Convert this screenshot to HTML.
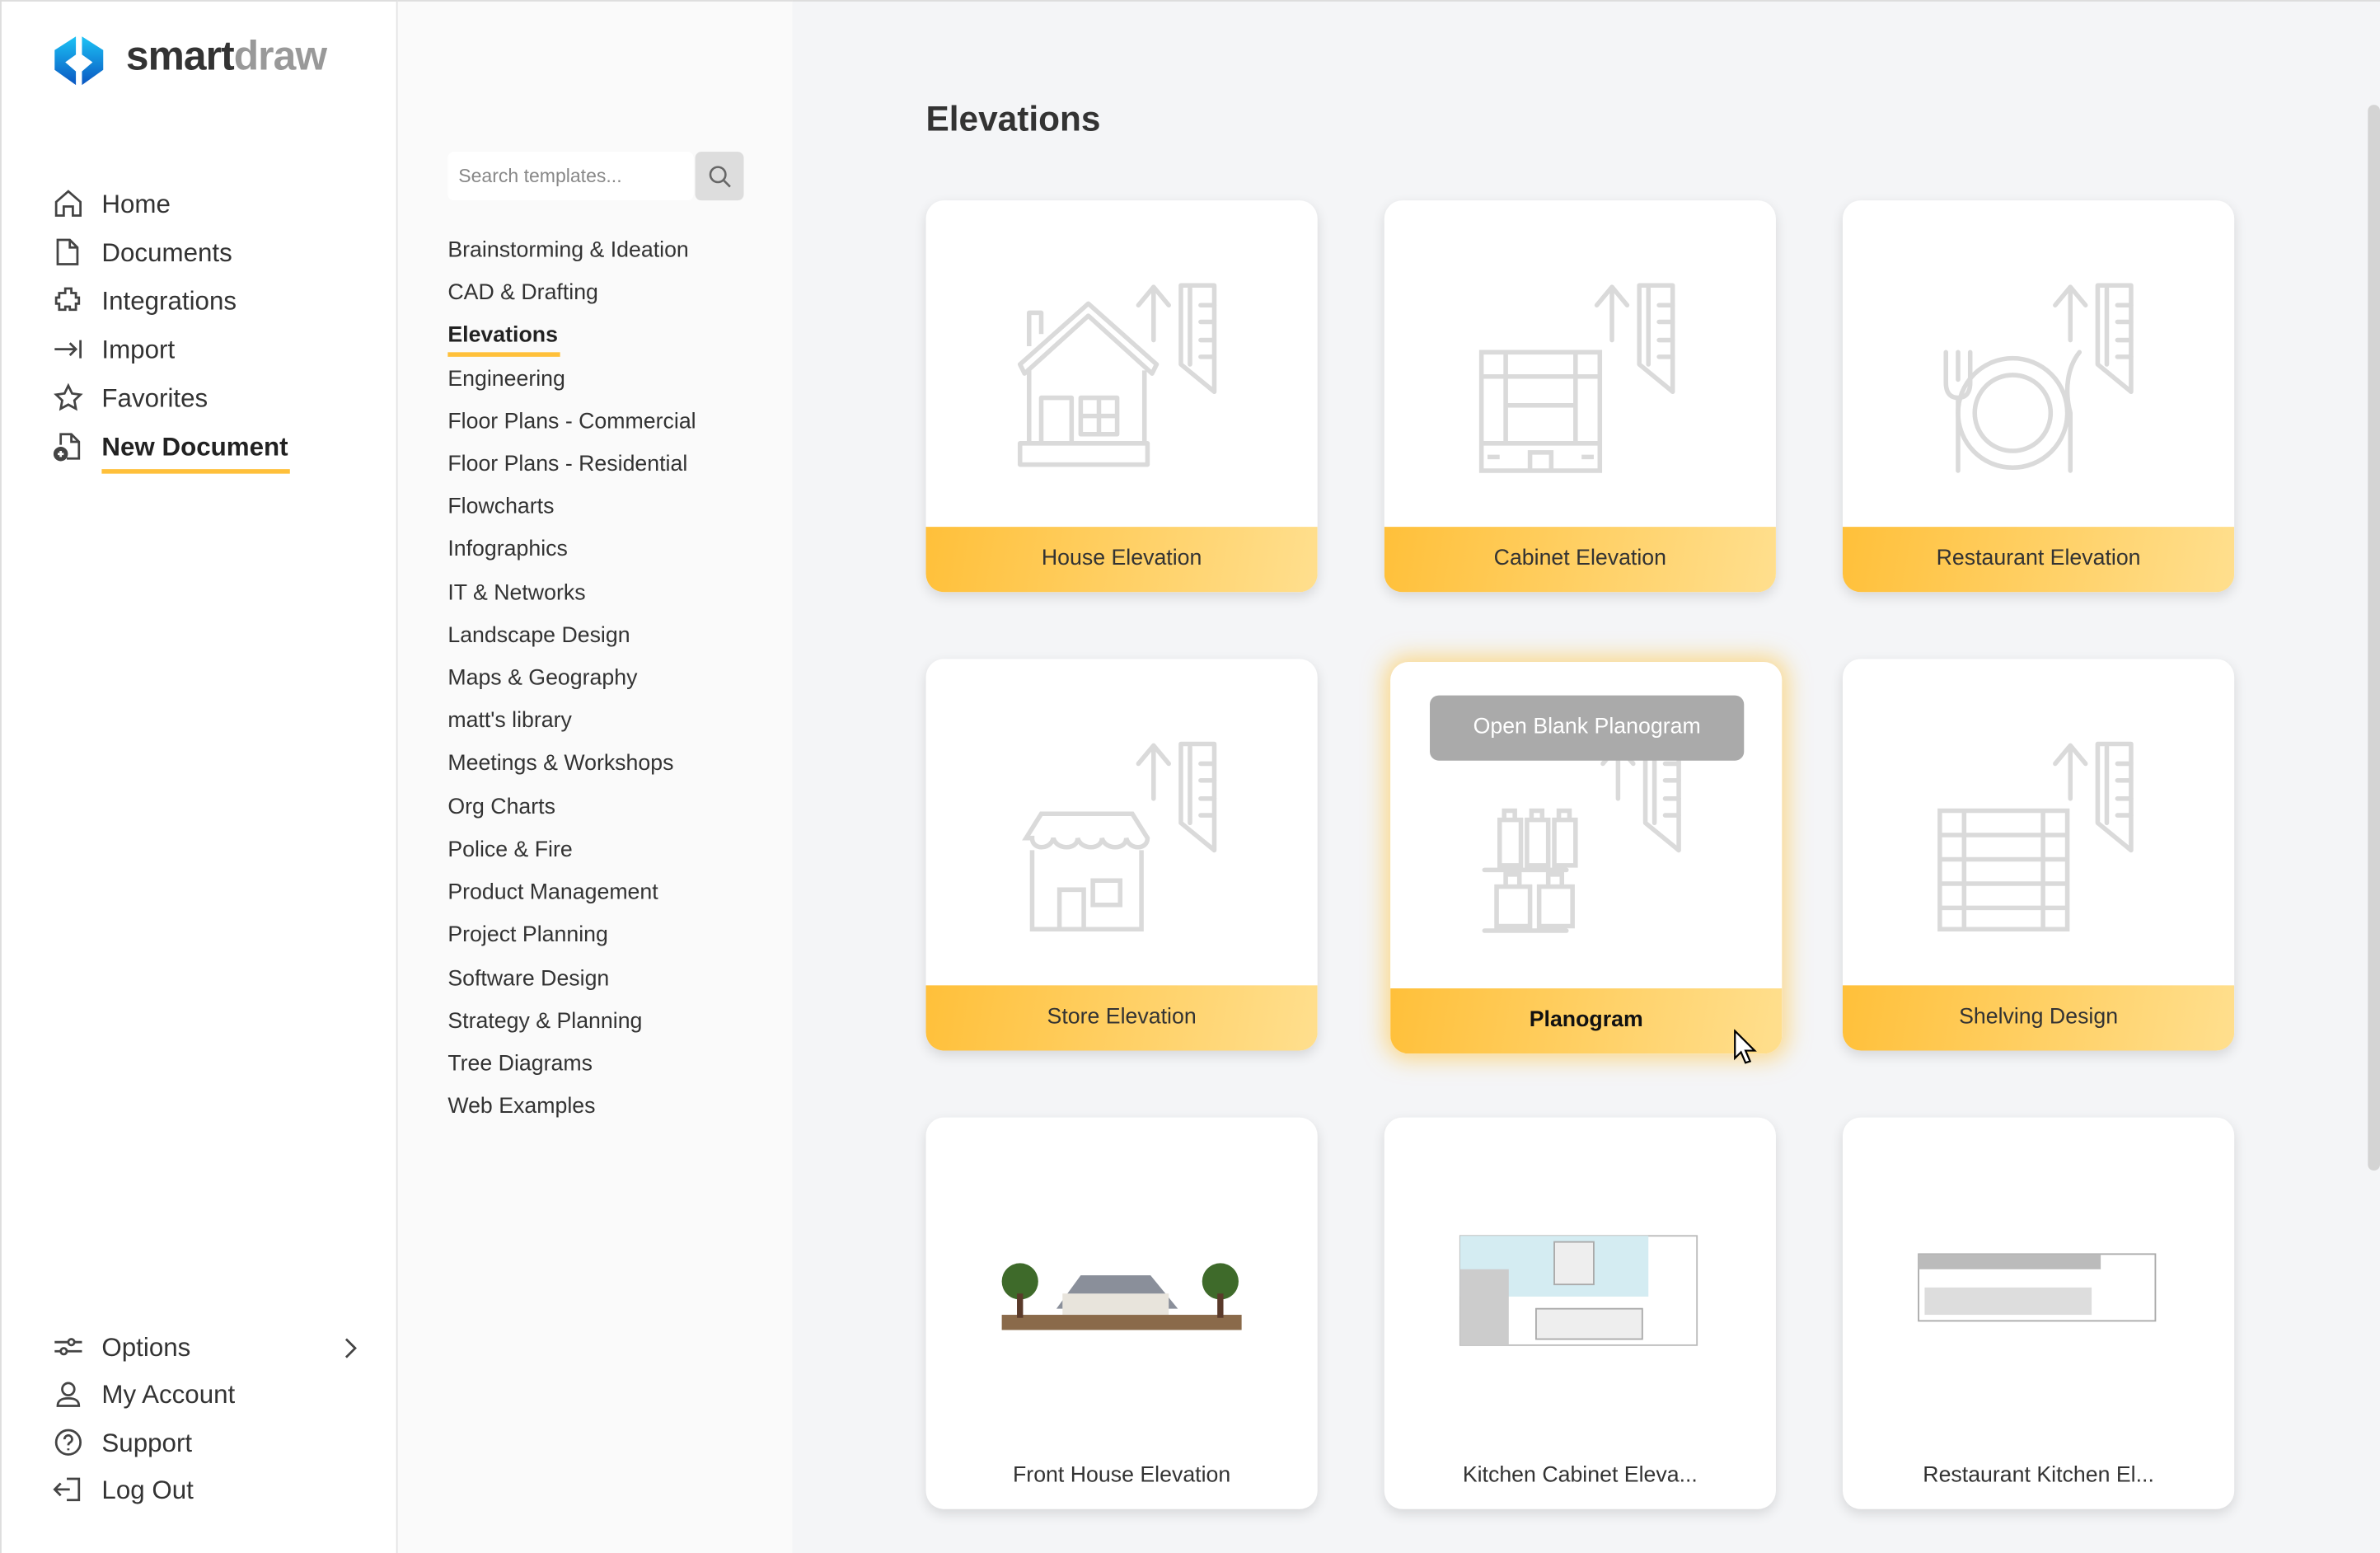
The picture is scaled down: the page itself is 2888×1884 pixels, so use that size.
<!DOCTYPE html>
<html><head><meta charset="utf-8"><style>
*{box-sizing:border-box;margin:0;padding:0}
html,body{width:2888px;height:1883px;overflow:hidden;background:#f4f5f7}
#w{position:absolute;left:0;top:0;width:1568px;height:1022.4px;transform:scale(1.84184);transform-origin:0 0;font-family:"Liberation Sans",sans-serif;color:#333}
.sb{position:absolute;left:0;top:0;width:262px;height:1023px;background:#fff;border-right:1px solid #e4e4e4;border-left:1px solid #ddd;border-top:1px solid #ddd}
.nav{position:absolute;left:34px;font-size:17px;color:#333}
.nav svg{position:absolute;left:0;top:-1px}
.nav span{position:absolute;left:32px;top:0;white-space:nowrap}
.mid{position:absolute;left:262px;top:0;width:260px;height:1023px;background:#fafafa;border-top:1px solid #ddd}
.cat{position:absolute;left:33px;font-size:14.5px;color:#333;white-space:nowrap;top:1px}
.main{position:absolute;left:522px;top:0;width:1046px;height:1023px;background:#f4f5f7;border-top:1px solid #ddd}
.card{position:absolute;width:258px;height:258px;background:#fff;border-radius:12px;box-shadow:0 3px 8px rgba(0,0,0,.12);overflow:hidden}
.card .band{position:absolute;left:0;right:0;bottom:0;height:43px;background:linear-gradient(100deg,#ffc03a,#ffdf8e);text-align:center;line-height:43px;font-size:14.5px;color:#333}
.card .lbl{position:absolute;left:0;right:0;bottom:0;height:43px;text-align:center;line-height:43px;font-size:14.5px;color:#333}
.card svg{position:absolute;left:0;top:0}
</style></head><body><div id="w">
<svg width="0" height="0" style="position:absolute"><defs>
<g id="ru" fill="none" stroke="#dadada" stroke-width="3" stroke-linecap="round" stroke-linejoin="round">
<path d="M150 92V57M140 69L150 57L160 69"/>
<path d="M168 56h22v70M168 56v52l22 18"/>
<path d="M174 58v50M181 69h9M181 80h9M181 92h9M181 103h9"/>
</g></defs></svg>

<div class="sb">
<svg style="position:absolute;left:34px;top:22px" width="34" height="34" viewBox="0 0 34 34">
<defs><linearGradient id="lg" x1="0" y1="0" x2="0" y2="1"><stop offset="0" stop-color="#1cc3f5"/><stop offset="1" stop-color="#0a56c2"/></linearGradient></defs>
<path d="M15 1L1 10v13l14 10v-9l-7-6l7-5z" fill="url(#lg)"/>
<path d="M19 1l14 9v13l-14 10v-9l7-6l-7-5z" fill="url(#lg)"/>
</svg>
<div style="position:absolute;left:82px;top:21px;font-size:27px;font-weight:bold;letter-spacing:-0.5px"><span style="color:#333">smart</span><span style="color:#999">draw</span></div>
<div class="nav" style="top:124px"><svg width="20" height="20" viewBox="0 0 20 20" fill="none" stroke="#444" stroke-width="1.5"><path d="M2 18V9l8-7 8 7v9h-5v-6H7v6z"/></svg><span>Home</span></div>
<div class="nav" style="top:156px"><svg width="20" height="20" viewBox="0 0 20 20" fill="none" stroke="#444" stroke-width="1.5"><path d="M3 2h8l5 5v11H3z M11 2v5h5"/></svg><span>Documents</span></div>
<div class="nav" style="top:188px"><svg width="20" height="20" viewBox="0 0 20 20" fill="none" stroke="#444" stroke-width="1.5"><path d="M8 2h4v3h3v3h2v4h-2v4h-4v-2H8v2H4v-4H2V8h2V5h4z"/></svg><span>Integrations</span></div>
<div class="nav" style="top:220px"><svg width="20" height="20" viewBox="0 0 20 20" fill="none" stroke="#444" stroke-width="1.5"><path d="M1 10h14M11 6l4 4-4 4M18 4v12"/></svg><span>Import</span></div>
<div class="nav" style="top:252px"><svg width="20" height="20" viewBox="0 0 20 20" fill="none" stroke="#444" stroke-width="1.5"><path d="M10 2l2.5 5.2 5.5.7-4 3.8 1 5.5-5-2.7-5 2.7 1-5.5-4-3.8 5.5-.7z"/></svg><span>Favorites</span></div>
<div class="nav" style="top:284px"><svg width="20" height="20" viewBox="0 0 20 20" fill="none" stroke="#444" stroke-width="1.5"><path d="M5 9V2h7l5 5v11H9M12 2v5h5"/><circle cx="5" cy="15" r="4" fill="#444"/><path d="M3 15h4M5 13v4" stroke="#fff"/></svg><span style="font-weight:bold;color:#222">New Document</span><div style="position:absolute;left:32px;top:24px;width:124px;height:3px;background:#ffc03a"></div></div>
<div class="nav" style="top:877px"><svg width="20" height="20" viewBox="0 0 20 20" fill="none" stroke="#444" stroke-width="1.5"><path d="M1 7h18M1 13h18"/><circle cx="12" cy="7" r="2" fill="#fff"/><circle cx="7" cy="13" r="2" fill="#fff"/></svg><span>Options</span><svg style="left:190px;top:0" width="12" height="20" viewBox="0 0 12 20" fill="none" stroke="#444" stroke-width="1.5"><path d="M3 4l6 6-6 6"/></svg></div>
<div class="nav" style="top:908px"><svg width="20" height="20" viewBox="0 0 20 20" fill="none" stroke="#444" stroke-width="1.5"><circle cx="10" cy="7" r="4"/><path d="M3 18c0-4 3-5 7-5s7 1 7 5z"/></svg><span>My Account</span></div>
<div class="nav" style="top:940px"><svg width="20" height="20" viewBox="0 0 20 20" fill="none" stroke="#444" stroke-width="1.5"><circle cx="10" cy="10" r="8"/><path d="M7.5 8a2.5 2.5 0 1 1 3.5 2.2c-.7.4-1 .8-1 1.8M10 14v1.2"/></svg><span>Support</span></div>
<div class="nav" style="top:971px"><svg width="20" height="20" viewBox="0 0 20 20" fill="none" stroke="#444" stroke-width="1.5"><path d="M9 3h8v14H9M1 10h10M5 6l-4 4 4 4"/></svg><span>Log Out</span></div>
</div>

<div class="mid">
<div style="position:absolute;left:33px;top:99px;width:162px;height:32px;background:#fff;border-radius:4px;font-size:12.5px;color:#888;line-height:32px;padding-left:7px">Search templates...</div>
<div style="position:absolute;left:196px;top:99px;width:32px;height:32px;background:#ddd;border-radius:4px"><svg width="32" height="32" viewBox="0 0 32 32" fill="none" stroke="#666" stroke-width="1.4"><circle cx="15" cy="15" r="5"/><path d="M19 19l4 4"/></svg></div>
<div class="cat" style="top:156px">Brainstorming &amp; Ideation</div>
<div class="cat" style="top:184px">CAD &amp; Drafting</div>
<div class="cat" style="top:212px;font-weight:bold;color:#222">Elevations</div>
<div style="position:absolute;left:33px;top:231px;width:74px;height:3px;background:#ffc03a"></div>
<div class="cat" style="top:241px">Engineering</div>
<div class="cat" style="top:269px">Floor Plans - Commercial</div>
<div class="cat" style="top:297px">Floor Plans - Residential</div>
<div class="cat" style="top:325px">Flowcharts</div>
<div class="cat" style="top:353px">Infographics</div>
<div class="cat" style="top:382px">IT &amp; Networks</div>
<div class="cat" style="top:410px">Landscape Design</div>
<div class="cat" style="top:438px">Maps &amp; Geography</div>
<div class="cat" style="top:466px">matt's library</div>
<div class="cat" style="top:494px">Meetings &amp; Workshops</div>
<div class="cat" style="top:523px">Org Charts</div>
<div class="cat" style="top:551px">Police &amp; Fire</div>
<div class="cat" style="top:579px">Product Management</div>
<div class="cat" style="top:607px">Project Planning</div>
<div class="cat" style="top:636px">Software Design</div>
<div class="cat" style="top:664px">Strategy &amp; Planning</div>
<div class="cat" style="top:692px">Tree Diagrams</div>
<div class="cat" style="top:720px">Web Examples</div>
</div>

<div class="main">
<div style="position:absolute;left:88px;top:64px;font-size:23px;font-weight:bold;color:#333">Elevations</div>
<div style="position:absolute;right:0;top:68px;width:8px;height:702px;background:#d4d4d4;border-radius:4px"></div>
</div>

<!-- row 1 -->
<div class="card" style="left:610px;top:132px"><svg width="258" height="258" fill="none" stroke="#dadada" stroke-width="3" stroke-linejoin="round"><use href="#ru"/><path d="M62 160h84v14H62z"/><path d="M62 108l45-40 45 40-3 6-42-38-42 38z"/><path d="M68 112v48M144 112v48M68 96v-22h8v14"/><path d="M76 160v-30h20v30M102 130h24v24h-24zM114 130v24M102 142h24"/></svg><div class="band">House Elevation</div></div>
<div class="card" style="left:912px;top:132px"><svg width="258" height="258" fill="none" stroke="#dadada" stroke-width="3"><use href="#ru"/><path d="M64 100h78v78H64zM64 116h78M80 100v60M126 100v60M64 160h78M80 135h46M96 178v-12h14v12M68 169h8M130 169h8"/></svg><div class="band">Cabinet Elevation</div></div>
<div class="card" style="left:1214px;top:132px"><svg width="258" height="258" fill="none" stroke="#dadada" stroke-width="3" stroke-linecap="round"><use href="#ru"/><circle cx="112" cy="140" r="36"/><circle cx="112" cy="140" r="25"/><path d="M68 100v20c0 8 4 10 8 10v48M76 100v18M84 100v20c0 8-4 10-8 10M156 100c-8 10-10 25-6 40v38"/></svg><div class="band">Restaurant Elevation</div></div>
<!-- row 2 -->
<div class="card" style="left:610px;top:434px"><svg width="258" height="258" fill="none" stroke="#dadada" stroke-width="3"><use href="#ru"/><path d="M66 118l10-16h60l10 16c0 8-12 8-14 0c0 8-14 8-16 0c0 8-14 8-16 0c0 8-14 8-16 0c-2 8-14 8-14 0zM70 126v52h72v-52M88 178v-26h16v26M110 146h18v16h-18z"/></svg><div class="band">Store Elevation</div></div>
<div class="card" style="left:916px;top:436px;box-shadow:0 0 14px 4px rgba(255,195,60,.55)"><svg width="258" height="258" fill="none" stroke="#dadada" stroke-width="3" stroke-linecap="round"><use href="#ru" transform="translate(0,-2)"/><path d="M62 137h54M62 177h54M72 104h14v30H72zM75 98h7v6h-7zM90 104h14v30H90zM93 98h7v6h-7zM108 104h14v30h-14zM111 98h7v6h-7zM70 148h22v26H70zM76 140h9v8h-9zM98 148h22v26H98zM104 140h9v8h-9z"/></svg>
<div style="position:absolute;left:26px;top:22px;width:207px;height:43px;background:#aaa;border-radius:6px;color:#fff;font-size:14.5px;text-align:center;line-height:43px">Open Blank Planogram</div>
<div class="band" style="font-weight:bold;color:#111">Planogram</div></div>
<div class="card" style="left:1214px;top:434px"><svg width="258" height="258" fill="none" stroke="#dadada" stroke-width="3"><use href="#ru"/><path d="M64 100h84v78H64zM64 116h84M64 132h84M64 148h84M64 164h84M80 100v78M132 100v78"/></svg><div class="band">Shelving Design</div></div>
<!-- row 3 -->
<div class="card" style="left:610px;top:736px"><svg width="258" height="258">
<rect x="50" y="130" width="158" height="10" fill="#8a6a4a"/><path d="M86 126l16-22h46l18 22z" fill="#8a8f9a"/><rect x="90" y="116" width="70" height="14" fill="#e8e4dc"/><circle cx="62" cy="108" r="12" fill="#3e6a2a"/><rect x="60" y="116" width="4" height="16" fill="#5a3a2a"/><circle cx="194" cy="108" r="12" fill="#3e6a2a"/><rect x="192" y="116" width="4" height="16" fill="#5a3a2a"/></svg><div class="lbl">Front House Elevation</div></div>
<div class="card" style="left:912px;top:736px"><svg width="258" height="258"><rect x="50" y="78" width="156" height="72" fill="#fff" stroke="#bbb"/><rect x="50" y="78" width="124" height="40" fill="#d4ecf2"/><rect x="50" y="100" width="32" height="50" fill="#ccc"/><rect x="100" y="126" width="70" height="20" fill="#eee" stroke="#aaa"/><rect x="112" y="82" width="26" height="28" fill="#eee" stroke="#aaa"/></svg><div class="lbl">Kitchen Cabinet Eleva...</div></div>
<div class="card" style="left:1214px;top:736px"><svg width="258" height="258"><rect x="50" y="90" width="156" height="44" fill="#fff" stroke="#aaa"/><rect x="50" y="90" width="120" height="10" fill="#bbb"/><rect x="54" y="112" width="110" height="18" fill="#ddd"/></svg><div class="lbl">Restaurant Kitchen El...</div></div>

<svg style="position:absolute;left:1142px;top:678px" width="16" height="24" viewBox="0 0 16 24"><path d="M1 1v18l4-4 3 7 3-1-3-7h6z" fill="#fff" stroke="#000" stroke-width="1.2"/></svg>
</div></body></html>
